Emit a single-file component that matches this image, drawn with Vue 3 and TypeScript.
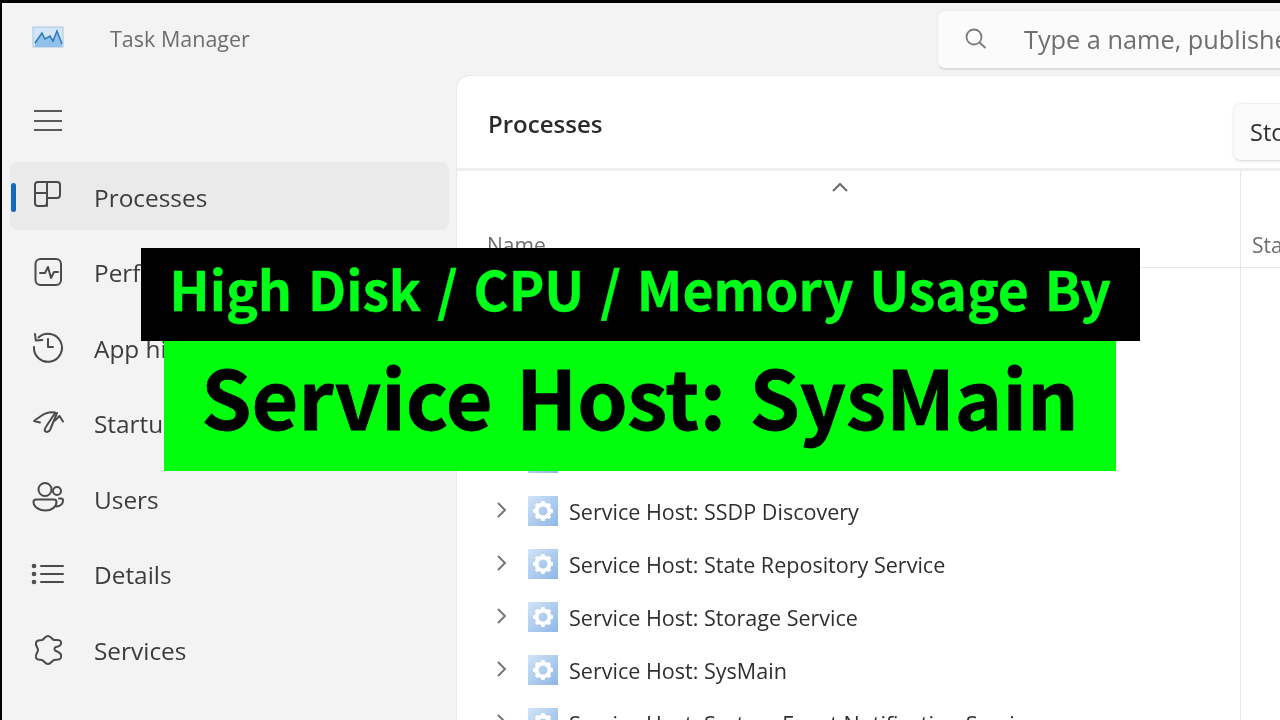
<script setup lang="ts">
interface NavItem { label: string; icon: string; active?: boolean }

const navItems: NavItem[] = [
  { label: 'Processes', active: true, icon: '<path d="M17 15H5M17 4v24M17 4H8a3 3 0 0 0-3 3v18a3 3 0 0 0 3 3h6a3 3 0 0 0 3-3M17 4h10a3 3 0 0 1 3 3v10a3 3 0 0 1-3 3H17"/>' },
  { label: 'Performance', icon: '<rect x="5.500" y="5" width="25.500" height="26" rx="5"/><path d="M10 19h5l3-6 3 11 3-6h4"/>' },
  { label: 'App history', icon: '<path d="M8.500 8.500A14 14 0 1 1 4 18"/><path d="M5 5l.8 6.500 6.500-.6M18 10v8h5"/>' },
  { label: 'Startup apps', icon: '<path d="M11 11 4 16l6 1.500M11 11C15 8 20 7 25 7.500"/><path d="M27 8 20 25c-1 2-4 2.500-5 1-1-1.500 0-3 1.500-5L25 8"/><path d="M25 15.500 29.500 11 33 16.500"/>' },
  { label: 'Users', icon: '<circle cx="15" cy="9.500" r="6.500"/><circle cx="27" cy="11" r="4"/><path d="M6 19.500h18c1.500 0 2.500 1 2.500 2.500 0 5-5 8.500-11 8.500S3.500 27 3.500 22c0-1.500 1-2.500 2.500-2.500zM29 18.500h2c1.200 0 2 .8 2 2 0 3-2.500 5.500-6.500 6"/>' },
  { label: 'Details', icon: '<path d="M11 10h22M11 18h22M11 26h22"/><circle cx="4" cy="10" r="1.300"/><circle cx="4" cy="18" r="1.300"/><circle cx="4" cy="26" r="1.300"/>' },
  { label: 'Services', icon: '<path d="M18 4C21 4 22 7.500 24 8C27 8.500 30 7 31 10C32 13 29 14.500 26 15C24 15.500 24 18.500 26 19C29 20 32 22 31 25.500C30 28.500 27 27.500 24 28C22 28.500 21 32 18 32C15 32 14 28.500 12 28C9 27.500 7 28.500 6 25.500C5 22.500 8 20.500 8 18C8 15.500 5 13.500 6 10.500C7 7.500 9 8.500 12 8C14 7.500 15 4 18 4Z"/>' },
]

const rows: { id: number; label: string }[] = [
  { id: 0, label: '' },
  { id: 1, label: 'Service Host: SSDP Discovery' },
  { id: 2, label: 'Service Host: State Repository Service' },
  { id: 3, label: 'Service Host: Storage Service' },
  { id: 4, label: 'Service Host: SysMain' },
  { id: 5, label: 'Service Host: System Event Notification Service' },
]
</script>

<template>
  <div class="screen">
    <div class="ui">
      <header class="titlebar">
        <svg class="app-logo" width="32" height="24" viewBox="0 0 32 24">
          <rect x="1" y="2" width="30" height="20" fill="#d3e5f6" stroke="#a9c8e2" />
          <path d="M3 18 10 8l3 6 5-3 3 5 4-10 5 13v3H3Z" fill="#8fc1ea" />
          <path d="M3 18 10 8l3 6 5-3 3 5 4-10 5 13" fill="none" stroke="#2e78bd" stroke-width="1.500" />
        </svg>
        <span class="app-title">Task Manager</span>
        <div class="search">
          <svg class="search-icon" width="24" height="24" viewBox="0 0 24 24">
            <circle cx="10" cy="10" r="7.500" />
            <path d="M15.500 15.500 21.500 21" />
          </svg>
          <span class="search-text">Type a name, publisher, or PID to search</span>
        </div>
      </header>

      <div class="body">
        <nav class="sidebar">
          <svg class="hamburger" width="36" height="36" viewBox="0 0 36 36">
            <path d="M4 8h28M4 18h28M4 27h28" />
          </svg>
          <ul class="nav">
            <li v-for="item in navItems" :key="item.label" class="nav-item" :class="{ active: item.active }">
              <span v-if="item.active" class="indicator"></span>
              <svg class="nav-icon" width="36" height="36" viewBox="0 0 36 36" v-html="item.icon"></svg>
              <span class="nav-label">{{ item.label }}</span>
            </li>
          </ul>
        </nav>

        <main class="card">
          <div class="card-head">
            <h1 class="card-title">Processes</h1>
            <button class="stop-btn">Stop</button>
          </div>
          <div class="table">
            <div class="col-name">
              <div class="th th-name">
                <svg class="sort" width="18" height="10" viewBox="0 0 18 10"><path d="M2 9l7-7 7 7" /></svg>
                <span class="th-label">Name</span>
              </div>
              <div class="tbody">
                <div v-for="row in rows" :key="row.id" class="row">
                  <svg class="chev" width="14" height="20" viewBox="0 0 14 20"><path d="M3 3l7 7-7 7" /></svg>
                  <svg class="gear" width="30" height="30" viewBox="0 0 30 30">
                    <defs>
                      <linearGradient id="gearBg" x1="0" y1="0" x2="1" y2="1">
                        <stop offset="0" stop-color="#d2e4f7" />
                        <stop offset="1" stop-color="#8db6e6" />
                      </linearGradient>
                    </defs>
                    <rect width="30" height="30" fill="url(#gearBg)" />
                    <circle cx="15" cy="15" r="6.500" fill="none" stroke="#fff" stroke-width="4" />
                    <path d="M15 5v20M5 15h20M8 8l14 14M22 8 8 22" stroke="#fff" stroke-width="3.500" stroke-dasharray="3.500 13 3.500" fill="none" />
                  </svg>
                  <span v-if="row.label" class="row-text">{{ row.label }}</span>
                </div>
              </div>
            </div>
            <div class="col-status">
              <div class="th th-status"><span class="th-label">Status</span></div>
            </div>
          </div>
        </main>
      </div>
    </div>

    <div class="banner">
      <div class="banner-top">High Disk / CPU / Memory Usage By</div>
      <div class="banner-main">Service Host: SysMain</div>
    </div>
  </div>
</template>

<style>
html, body { margin: 0; background: #000; }
</style>

<style scoped>
.screen {
  position: relative;
  width: 1280px;
  height: 720px;
  box-sizing: border-box;
  overflow: hidden;
  background: #f3f3f3;
  border-top: 3px solid #000;
  border-left: 2px solid #000;
  font-family: "Open Sans", "Noto Sans", sans-serif;
}
.ui {
  display: flex;
  flex-direction: column;
  height: 100%;
  filter: blur(0.45px);
}
.titlebar {
  display: flex;
  align-items: center;
  height: 72px;
  flex: none;
}
.app-logo { margin-left: 30px; margin-top: -5px; flex: none; }
.app-title {
  margin-left: 46px;
  margin-top: -1px;
  width: 827px;
  font-size: 21.500px;
  color: #6e6e6e;
  flex: none;
}
.search {
  display: flex;
  align-items: center;
  flex: none;
  box-sizing: border-box;
  width: 421px;
  height: 60px;
  margin-top: 1px;
  padding-left: 26px;
  background: #fbfbfb;
  border: 1px solid #ececec;
  border-bottom: 2px solid #dedede;
  border-radius: 8px 0 0 8px;
  white-space: nowrap;
}
.search-icon { flex: none; fill: none; stroke: #7a7a7a; stroke-width: 1.800; }
.search-text { margin-left: 36px; font-size: 25.300px; color: #6f6f6f; }
.body { display: flex; flex: 1; min-height: 0; }
.sidebar {
  box-sizing: border-box;
  width: 454px;
  flex: none;
  padding: 28px 7px 0 8px;
}
.hamburger {
  display: block;
  margin-left: 20px;
  margin-bottom: 23px;
  fill: none;
  stroke: #5a5a5a;
  stroke-width: 2;
}
.nav {
  list-style: none;
  margin: 0;
  padding: 0;
  display: flex;
  flex-direction: column;
  gap: 7.600px;
}
.nav-item {
  position: relative;
  display: flex;
  align-items: center;
  gap: 28px;
  height: 68px;
  padding-left: 20px;
  border-radius: 8px;
}
.nav-item.active { background: #eaeaea; }
.indicator {
  position: absolute;
  left: 1px;
  top: 21px;
  width: 5px;
  height: 29px;
  border-radius: 3px;
  background: #0f6cbd;
}
.nav-icon {
  flex: none;
  fill: none;
  stroke: #4a4a4a;
  stroke-width: 2;
  stroke-linecap: round;
  stroke-linejoin: round;
}
.nav-label { font-size: 24.400px; color: #3c3c3c; white-space: nowrap; margin-top: 2px; }
.card {
  flex: 1;
  min-width: 0;
  background: #fff;
  border-top: 1px solid #e8e8e8;
  border-left: 1px solid #e8e8e8;
  border-top-left-radius: 14px;
  display: flex;
  flex-direction: column;
}
.card-head {
  display: flex;
  align-items: center;
  justify-content: space-between;
  box-sizing: border-box;
  height: 95px;
  padding-left: 31px;
  border-bottom: 3px solid #efefef;
  flex: none;
  position: relative;
}
.card-title {
  margin: 3px 0 0;
  font-size: 24px;
  font-weight: 600;
  color: #2b2b2b;
}
.stop-btn {
  position: absolute;
  left: 776px;
  top: 27px;
  box-sizing: border-box;
  width: 80px;
  height: 58px;
  padding: 0 0 1px 16px;
  text-align: left;
  font: inherit;
  font-size: 23.500px;
  color: #2e2e2e;
  background: #fbfbfb;
  border: 1px solid #f0f0f0;
  border-bottom: 1px solid #e2e2e2;
  box-shadow: 0 1px 3px rgba(0, 0, 0, 0.08);
  border-radius: 8px 0 0 8px;
}
.table { display: flex; flex: 1; min-height: 0; }
.col-name { width: 783px; flex: none; }
.col-status { flex: 1; border-left: 1px solid #e6e6e6; }
.th {
  box-sizing: border-box;
  height: 97px;
  border-bottom: 1px solid #e8e8e8;
  display: flex;
  flex-direction: column;
}
.th-name { padding-left: 30px; }
.th-status { padding-left: 11px; }
.sort {
  margin: 11px 0 0 344px;
  fill: none;
  stroke: #6a6a6a;
  stroke-width: 2;
  flex: none;
}
.th-label { margin-top: auto; margin-bottom: 8px; font-size: 21px; color: #6d6d6d; }
.tbody { padding-top: 163px; }
.row {
  display: flex;
  align-items: center;
  height: 53px;
  padding-left: 38px;
}
.chev {
  flex: none;
  margin-top: -1px;
  fill: none;
  stroke: #777;
  stroke-width: 2;
}
.gear { flex: none; margin-left: 19px; }
.row-text {
  margin-left: 11px;
  margin-top: 1px;
  font-size: 21.550px;
  color: #2f2f2f;
  white-space: nowrap;
}
.banner {
  position: absolute;
  left: -2px;
  right: 0;
  top: 245px;
  display: flex;
  flex-direction: column;
  align-items: center;
  font-family: "Noto Sans CJK SC", "Noto Sans", sans-serif;
  font-weight: 700;
  white-space: nowrap;
}
.banner-top {
  box-sizing: border-box;
  width: 999px;
  height: 93px;
  line-height: 79px;
  text-align: center;
  background: #000;
  color: #00ff19;
  font-size: 53.500px;
  word-spacing: 3.700px;
  -webkit-text-stroke: 0.4px #00ff19;
}
.banner-main {
  box-sizing: border-box;
  width: 952px;
  height: 130px;
  line-height: 107px;
  text-align: center;
  background: #00ff0c;
  color: #000;
  font-size: 80.700px;
  word-spacing: 5px;
  -webkit-text-stroke: 0.8px #000;
}
</style>
